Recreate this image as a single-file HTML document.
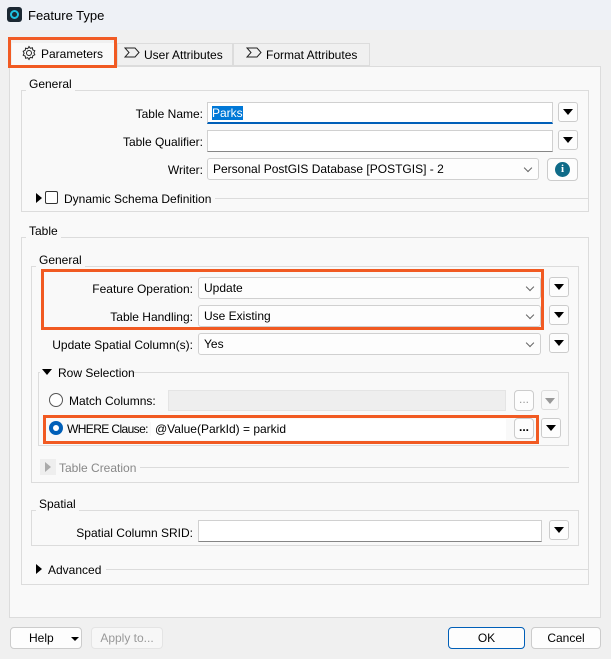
<!DOCTYPE html>
<html><head><style>
*{box-sizing:border-box}
body{margin:0;width:611px;height:659px;background:#f0f0f0;font-family:"Liberation Sans",sans-serif;font-size:12px;color:#000;position:relative;overflow:hidden}
.a{position:absolute}
.lbl{position:absolute;text-align:right;white-space:nowrap}
.in{position:absolute;background:#fff;border:1px solid #d0d0d0;border-bottom:1px solid #868686;height:22px;padding:3px 4px;white-space:nowrap}
.cb{position:absolute;background:#fdfdfd;border:1px solid #d0d0d0;border-radius:3px;height:22px;padding:3px 5px;white-space:nowrap}
.cb:after{content:"";position:absolute;right:7px;top:6px;width:5px;height:5px;border-right:1px solid #666;border-bottom:1px solid #666;transform:rotate(45deg)}
.db{position:absolute;width:20px;height:20px;background:#fdfdfd;border:1px solid #ccc;border-radius:3px}
.db:after{content:"";position:absolute;left:4px;top:6px;border-left:5px solid transparent;border-right:5px solid transparent;border-top:6px solid #000}
.grp{position:absolute;border:1px solid #dcdcdc}
.gl{position:absolute;background:#f9f9f9;padding:0 3px}
.or{position:absolute;border:3px solid #f15a22}
.btn{position:absolute;height:22px;border:1px solid #ccc;border-radius:4px;background:#fdfdfd;text-align:center;line-height:20px}
</style></head><body>
<div class="a" style="left:0;top:0;width:611px;height:30px;background:#eef1f6"></div>
<div class="a" style="left:7px;top:7px;width:15px;height:15px;background:#1b2833;border-radius:3px"><div class="a" style="left:3px;top:3px;width:9px;height:9px;border:2px solid #1fc0e0;border-radius:50%"></div></div>
<div class="a" style="left:28px;top:8px;font-size:13px">Feature Type</div>

<div class="a" style="left:9px;top:66px;width:592px;height:552px;background:#f9f9f9;border:1px solid #dcdcdc"></div>
<div class="a" style="left:12px;top:43px;width:102px;height:24px;background:#f9f9f9"></div>
<div class="a" style="left:117px;top:43px;width:116px;height:23px;border:1px solid #dcdcdc;background:#f0f0f0"></div>
<div class="a" style="left:233px;top:43px;width:137px;height:23px;border:1px solid #dcdcdc;background:#f0f0f0"></div>
<div class="or" style="left:8px;top:37px;width:109px;height:31px"></div>
<svg class="a" style="left:21px;top:45px" width="16" height="16" viewBox="0 0 16 16"><circle cx="8" cy="8" r="2.5" fill="none" stroke="#222"/><path d="M8 1.5l1.3 1.8 2.1-.6.4 2.2 2 .9-.9 2 .9 2-2 .9-.4 2.2-2.1-.6L8 14.5l-1.3-1.8-2.1.6-.4-2.2-2-.9.9-2-.9-2 2-.9.4-2.2 2.1.6z" fill="none" stroke="#222"/></svg>
<div class="a" style="left:41px;top:47px;font-size:12px">Parameters</div>
<svg class="a" style="left:124px;top:47px" width="16" height="11"><path d="M1 1h10l4 4.5-4 4.5H1l4-4.5z" fill="none" stroke="#222"/></svg>
<div class="a" style="left:144px;top:48px">User Attributes</div>
<svg class="a" style="left:246px;top:47px" width="16" height="11"><path d="M1 1h10l4 4.5-4 4.5H1l4-4.5z" fill="none" stroke="#222"/></svg>
<div class="a" style="left:266px;top:48px">Format Attributes</div>

<div class="grp" style="left:21px;top:90px;width:568px;height:122px"></div>
<div class="gl" style="left:26px;top:77px">General</div>
<div class="lbl" style="right:408px;top:107px">Table Name:</div>
<div class="in" style="left:207px;top:102px;width:346px;border-bottom:2px solid #005fb8"><span style="background:#0078d7;color:#fff">Parks</span></div>
<div class="db" style="left:558px;top:102px"></div>
<div class="lbl" style="right:408px;top:135px">Table Qualifier:</div>
<div class="in" style="left:207px;top:130px;width:346px"></div>
<div class="db" style="left:558px;top:130px"></div>
<div class="lbl" style="right:408px;top:163px">Writer:</div>
<div class="cb" style="left:207px;top:158px;width:332px">Personal PostGIS Database [POSTGIS] - 2</div>
<div class="btn" style="left:547px;top:158px;width:31px;height:23px"><div style="margin:3px auto;width:15px;height:15px;border-radius:50%;background:#0f6b88;color:#fff;font-weight:bold;font-size:11px;line-height:15px;font-family:'Liberation Serif',serif">i</div></div>
<div class="a" style="left:36px;top:193px;border-top:5px solid transparent;border-bottom:5px solid transparent;border-left:6px solid #000"></div>
<div class="a" style="left:45px;top:191px;width:13px;height:13px;border:1px solid #333;border-radius:2px;background:#fff"></div>
<div class="a" style="left:64px;top:192px">Dynamic Schema Definition</div>
<div class="a" style="left:215px;top:198px;width:374px;border-top:1px solid #dcdcdc"></div>

<div class="grp" style="left:21px;top:237px;width:568px;height:348px"></div>
<div class="gl" style="left:26px;top:224px">Table</div>
<div class="grp" style="left:31px;top:266px;width:548px;height:217px"></div>
<div class="gl" style="left:36px;top:253px">General</div>
<div class="lbl" style="right:418px;top:282px">Feature Operation:</div>
<div class="cb" style="left:198px;top:277px;width:343px">Update</div>
<div class="db" style="left:549px;top:277px"></div>
<div class="lbl" style="right:418px;top:310px">Table Handling:</div>
<div class="cb" style="left:198px;top:305px;width:343px">Use Existing</div>
<div class="db" style="left:549px;top:305px"></div>
<div class="or" style="left:41px;top:269px;width:503px;height:61px"></div>
<div class="lbl" style="right:418px;top:338px">Update Spatial Column(s):</div>
<div class="cb" style="left:198px;top:333px;width:343px">Yes</div>
<div class="db" style="left:549px;top:333px"></div>

<div class="grp" style="left:38px;top:372px;width:531px;height:74px"></div>
<div class="a" style="left:40px;top:364px;width:92px;height:16px;background:#f9f9f9"></div>
<div class="a" style="left:42px;top:369px;border-left:5px solid transparent;border-right:5px solid transparent;border-top:6px solid #000"></div>
<div class="a" style="left:58px;top:366px">Row Selection</div>
<div class="a" style="left:49px;top:393px;width:14px;height:14px;border:1px solid #555;border-radius:50%;background:#fff"></div>
<div class="a" style="left:69px;top:394px">Match Columns:</div>
<div class="a" style="left:168px;top:390px;width:338px;height:21px;background:#eeeeee;border:1px solid #e4e4e4"></div>
<div class="btn" style="left:514px;top:390px;width:20px;height:21px;color:#999;line-height:16px">...</div>
<div class="a" style="left:541px;top:390px;width:18px;height:20px;border:1px solid #ddd;border-radius:3px"><div class="a" style="left:3px;top:7px;border-left:5px solid transparent;border-right:5px solid transparent;border-top:6px solid #999"></div></div>
<div class="a" style="left:49px;top:421px;width:14px;height:14px;border-radius:50%;background:#005fb8"><div class="a" style="left:4px;top:4px;width:6px;height:6px;border-radius:50%;background:#fff"></div></div>
<div class="a" style="left:150px;top:419px;width:356px;height:21px;background:#fff;padding:3px 5px">@Value(ParkId) = parkid</div>
<div class="a" style="left:67px;top:422px;letter-spacing:-0.6px;background:#f9f9f9;padding-right:3px">WHERE Clause:</div>
<div class="btn" style="left:514px;top:418px;width:20px;height:21px;line-height:16px;font-weight:bold">...</div>
<div class="db" style="left:541px;top:418px"></div>
<div class="or" style="left:43px;top:415px;width:496px;height:29px"></div>

<div class="a" style="left:40px;top:459px;width:16px;height:16px;background:#eee"></div>
<div class="a" style="left:45px;top:462px;border-top:5px solid transparent;border-bottom:5px solid transparent;border-left:6px solid #aaa"></div>
<div class="a" style="left:59px;top:461px;color:#888">Table Creation</div>
<div class="a" style="left:140px;top:467px;width:429px;border-top:1px solid #dcdcdc"></div>

<div class="grp" style="left:31px;top:510px;width:548px;height:36px"></div>
<div class="gl" style="left:36px;top:497px">Spatial</div>
<div class="lbl" style="right:418px;top:526px">Spatial Column SRID:</div>
<div class="in" style="left:198px;top:520px;width:344px"></div>
<div class="db" style="left:549px;top:520px"></div>

<div class="a" style="left:36px;top:564px;border-top:5px solid transparent;border-bottom:5px solid transparent;border-left:6px solid #000"></div>
<div class="a" style="left:48px;top:563px">Advanced</div>
<div class="a" style="left:106px;top:569px;width:483px;border-top:1px solid #dcdcdc"></div>

<div class="btn" style="left:10px;top:627px;width:72px;text-align:left;padding-left:18px">Help<div class="a" style="left:60px;top:9px;border-left:4px solid transparent;border-right:4px solid transparent;border-top:4px solid #000"></div></div>
<div class="btn" style="left:91px;top:627px;width:72px;color:#999;border-color:#e4e4e4;background:#f7f7f7">Apply to...</div>
<div class="btn" style="left:448px;top:627px;width:77px;border-color:#005fb8">OK</div>
<div class="btn" style="left:531px;top:627px;width:70px">Cancel</div>
</body></html>
